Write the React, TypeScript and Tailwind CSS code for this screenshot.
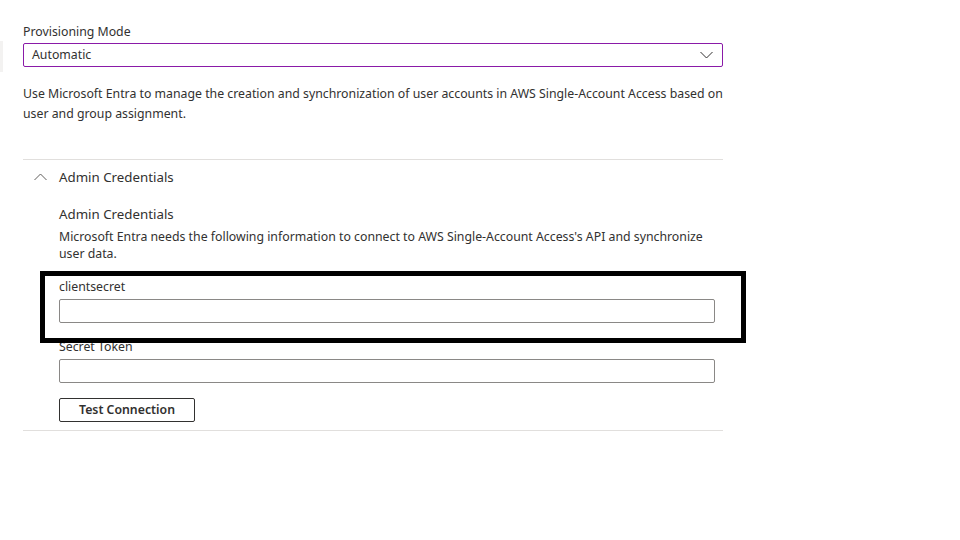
const font = { fontFamily: '"Segoe UI", "Noto Sans", "Open Sans", sans-serif' };

function Chevron({ up }: { up?: boolean }) {
  return (
    <svg width="13" height="8" viewBox="0 0 13 8" fill="none" className="block">
      <polyline
        points={up ? '0.5,7 6.5,1 12.5,7' : '0.5,1 6.5,7 12.5,1'}
        stroke={up ? '#605e5c' : '#323130'}
        strokeWidth="1"
      />
    </svg>
  );
}

function Field({ label }: { label: string }) {
  return (
    <div>
      <div className="text-[12.3px] leading-[16px]">{label}</div>
      <input className="mt-[4px] block h-[24px] w-[656px] rounded-[2px] border border-[#8a8886] bg-white outline-none" />
    </div>
  );
}

export default function App() {
  return (
    <div className="relative h-[540px] w-[960px] bg-white text-[#323130]" style={font}>
      <div className="absolute left-0 top-[41px] h-[31px] w-[3px] bg-[#f3f2f1]" />
      <div className="ml-[23px] w-[700px] pt-[23px]">
        <div className="text-[12.3px] leading-[17px]">Provisioning Mode</div>
        <div className="mt-[3px] flex h-[24px] items-center justify-between rounded-[2px] border border-[#8a1aa8] pl-[8px] pr-[9px] text-[12.3px]">
          <span className="leading-[16px]">Automatic</span>
          <Chevron />
        </div>
        <p className="mt-[17px] text-[12.3px] leading-[20px]">
          Use Microsoft Entra to manage the creation and synchronization of user accounts in AWS Single-Account Access based on
          <br />
          user and group assignment.
        </p>
        <div className="mt-[35px] border-t border-[#e1dfdd]" />
        <div className="flex h-[34px] items-center">
          <div className="ml-[11px] mr-[12px]">
            <Chevron up />
          </div>
          <span className="text-[13.3px] leading-[18px]">Admin Credentials</span>
        </div>
        <div className="pl-[36px]">
          <div className="mt-[10px] text-[13.3px] leading-[20px]">Admin Credentials</div>
          <p className="mt-[4px] w-[664px] text-[12.3px] leading-[17px]">
            Microsoft Entra needs the following information to connect to AWS Single-Account Access's API and synchronize
            <br />
            user data.
          </p>
          <div className="mt-[17px]">
            <Field label="clientsecret" />
          </div>
          <div className="mt-[16px]">
            <Field label="Secret Token" />
          </div>
          <button className="mt-[15px] block h-[24px] w-[136px] rounded-[2px] border border-[#323130] bg-white text-[12.3px] font-semibold leading-[20px] text-[#323130]">
            Test Connection
          </button>
        </div>
        <div className="mt-[8px] border-t border-[#e1dfdd]" />
      </div>
      <div className="pointer-events-none absolute left-[40px] top-[271px] h-[72px] w-[706px] border-[5px] border-black" />
    </div>
  );
}
